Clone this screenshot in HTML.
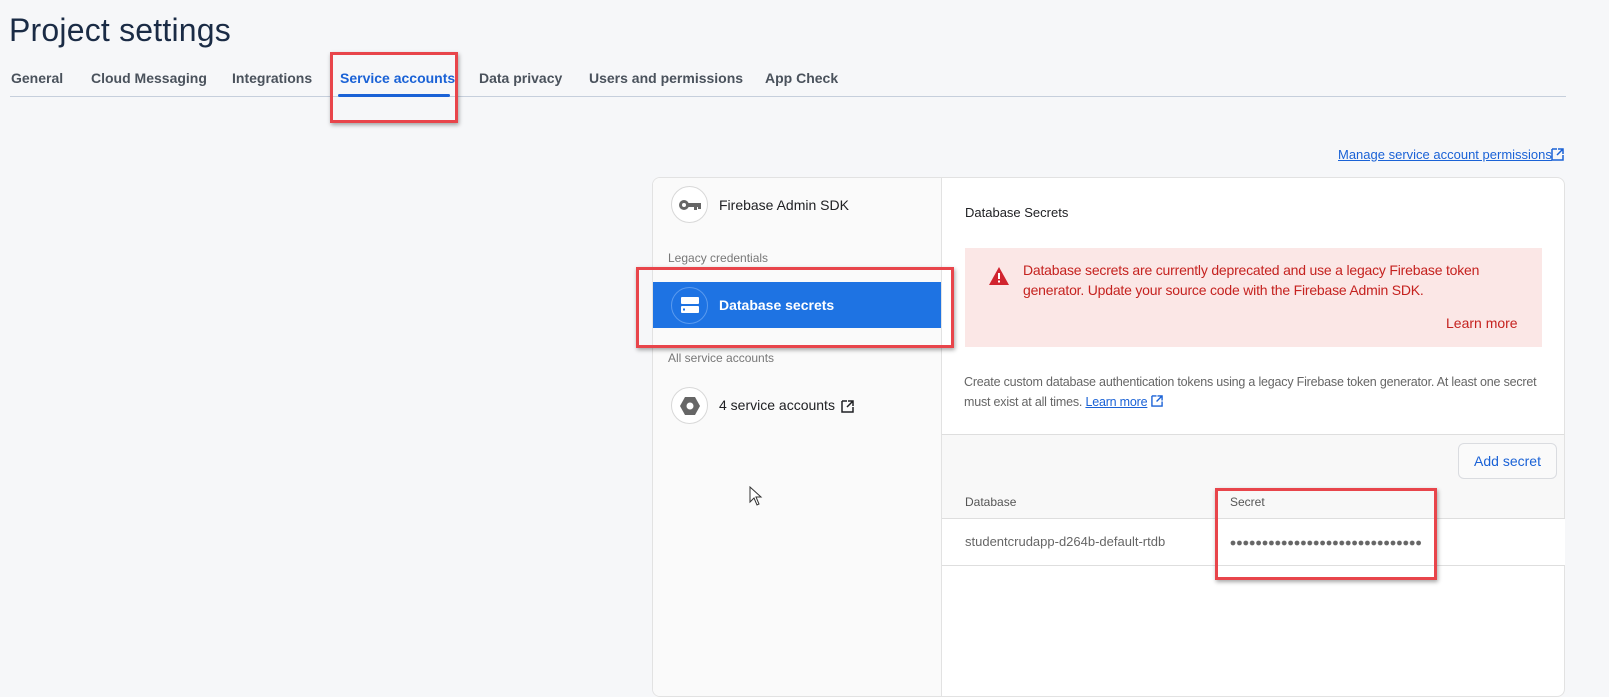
<!DOCTYPE html>
<html><head><meta charset="utf-8"><style>
*{box-sizing:border-box;margin:0;padding:0}
body{width:1609px;height:669px;overflow:hidden;background:#f6f7f9;font-family:"Liberation Sans",sans-serif;position:relative;color:#202124}
.a{position:absolute}
h1{position:absolute;left:9px;top:12px;font-size:32px;font-weight:400;color:#1a2b45;letter-spacing:0.2px}
.tab{position:absolute;top:70px;font-size:14px;font-weight:bold;color:#4a525c}
.red{position:absolute;border:3px solid #e8454b;box-shadow:1px 2px 4px rgba(0,0,0,.35)}
.circ{position:absolute;width:37px;height:37px;border-radius:50%;border:1px solid #d8d8d8;background:#fff}
</style></head><body>
<h1>Project settings</h1>
<div class="tab" style="left:11px">General</div>
<div class="tab" style="left:91px">Cloud Messaging</div>
<div class="tab" style="left:232px">Integrations</div>
<div class="tab" style="left:340px;color:#1a62d6">Service accounts</div>
<div class="tab" style="left:479px">Data privacy</div>
<div class="tab" style="left:589px">Users and permissions</div>
<div class="tab" style="left:765px">App Check</div>
<div class="a" style="left:10px;top:96px;width:1556px;height:1px;background:#c6cfdc"></div>
<div class="a" style="left:338px;top:94px;width:112px;height:3px;background:#1a62d6;border-radius:2px"></div>
<div class="red" style="left:330px;top:52px;width:128px;height:71px"></div>

<div class="a" style="left:1338px;top:147px;font-size:13px;color:#1a62d6;text-decoration:underline">Manage service account permissions</div>
<svg class="a" style="left:1551px;top:148px" width="13" height="13" viewBox="0 0 13 13"><path d="M1 1h5M1 1v11h11V7M7 1h5v5M12 1L6 7" stroke="#1a62d6" stroke-width="1.5" fill="none"/></svg>

<div class="a" style="left:652px;top:177px;width:913px;height:520px;background:#fff;border:1px solid #e2e2e2;border-radius:8px;overflow:hidden">
 <div class="a" style="left:0;top:0;width:289px;height:520px;background:#fafafa;border-right:1px solid #e2e2e2"></div>
 <div class="a" style="left:289px;top:256px;width:624px;height:85px;background:#f8f8f8;border-top:1px solid #dedede"></div>
</div>
<div class="circ" style="left:671px;top:186px"></div>
<svg class="a" style="left:678px;top:198px" width="24" height="14" viewBox="0 0 24 14"><circle cx="6" cy="7" r="5" fill="#666"/><circle cx="6" cy="7" r="2" fill="#fff"/><rect x="10" y="5" width="13" height="4" fill="#666"/><rect x="16" y="8" width="3" height="4" fill="#666"/><rect x="20" y="8" width="3" height="3" fill="#666"/></svg>
<div class="a" style="left:719px;top:197px;font-size:14px">Firebase Admin SDK</div>
<div class="a" style="left:668px;top:251px;font-size:12px;color:#777">Legacy credentials</div>
<div class="a" style="left:653px;top:282px;width:288px;height:46px;background:#1e73e3"></div>
<div class="circ" style="left:671px;top:287px;background:transparent;border-color:#5a9aee"></div>
<svg class="a" style="left:681px;top:297px" width="18" height="17" viewBox="0 0 18 17"><rect x="0" y="0" width="18" height="7" rx="1" fill="#fff"/><rect x="0" y="9" width="18" height="7" rx="1" fill="#fff"/><rect x="2" y="11.5" width="2" height="2" fill="#1e73e3"/></svg>
<div class="a" style="left:719px;top:297px;font-size:14px;color:#fff;font-weight:bold">Database secrets</div>
<div class="red" style="left:636px;top:267px;width:318px;height:81px"></div>
<div class="a" style="left:668px;top:351px;font-size:12px;color:#777">All service accounts</div>
<div class="circ" style="left:671px;top:387px"></div>
<svg class="a" style="left:679px;top:395px" width="22" height="22" viewBox="0 0 22 22"><polygon points="6,2 16,2 21,11 16,20 6,20 1,11" fill="#666"/><circle cx="11" cy="11" r="3.5" fill="#fff"/></svg>
<div class="a" style="left:719px;top:397px;font-size:14px">4 service accounts</div>
<svg class="a" style="left:841px;top:400px" width="13" height="13" viewBox="0 0 13 13"><path d="M1 1h5M1 1v11h11V7M7 1h5v5M12 1L6 7" stroke="#202124" stroke-width="1.5" fill="none"/></svg>
<svg class="a" style="left:749px;top:486px" width="14" height="20" viewBox="0 0 14 20"><path d="M1 1v15l4-4 3 7 2-1-3-7h5z" fill="#fff" stroke="#333" stroke-width="1"/></svg>

<div class="a" style="left:965px;top:205px;font-size:13px;color:#202124">Database Secrets</div>
<div class="a" style="left:965px;top:248px;width:577px;height:99px;background:#fbe7e6"></div>
<svg class="a" style="left:989px;top:267px" width="20" height="18" viewBox="0 0 20 18"><polygon points="10,0 20,18 0,18" fill="#d1242f"/><rect x="9" y="6" width="2" height="6" fill="#fff"/><rect x="9" y="13.5" width="2" height="2" fill="#fff"/></svg>
<div class="a" style="left:1023px;top:260px;font-size:14px;line-height:20px;color:#c5221f;width:500px;letter-spacing:-0.2px">Database secrets are currently deprecated and use a legacy Firebase token generator. Update your source code with the Firebase Admin SDK.</div>
<div class="a" style="left:1446px;top:315px;font-size:14px;color:#c5221f">Learn more</div>
<div class="a" style="left:964px;top:372px;font-size:12.5px;line-height:20px;color:#666;width:575px;letter-spacing:-0.2px">Create custom database authentication tokens using a legacy Firebase token generator. At least one secret must exist at all times. <span style="color:#1a62d6;text-decoration:underline">Learn more</span> <svg width="12" height="12" viewBox="0 0 13 13" style="vertical-align:-1px"><path d="M1 1h5M1 1v11h11V7M7 1h5v5M12 1L6 7" stroke="#1a62d6" stroke-width="1.5" fill="none"/></svg></div>
<div class="a" style="left:1458px;top:443px;width:99px;height:36px;border:1px solid #dadce0;border-radius:6px;background:#fafafa;font-size:14px;color:#1a62d6;text-align:center;line-height:34px">Add secret</div>
<div class="a" style="left:965px;top:495px;font-size:12px;color:#555">Database</div>
<div class="a" style="left:1230px;top:495px;font-size:12px;color:#555">Secret</div>
<div class="a" style="left:942px;top:518px;width:623px;height:48px;background:#fff;border-top:1px solid #dedede;border-bottom:1px solid #dedede"></div>
<div class="a" style="left:965px;top:534px;font-size:13px;color:#666">studentcrudapp-d264b-default-rtdb</div>
<svg class="a" style="left:1230px;top:539px" width="192" height="8"><defs><pattern id="d" width="6.4" height="8" patternUnits="userSpaceOnUse"><circle cx="3" cy="4" r="2.4" fill="#666"/></pattern></defs><rect width="192" height="8" fill="url(#d)"/></svg>
<div class="red" style="left:1215px;top:488px;width:222px;height:92px"></div>
</body></html>
